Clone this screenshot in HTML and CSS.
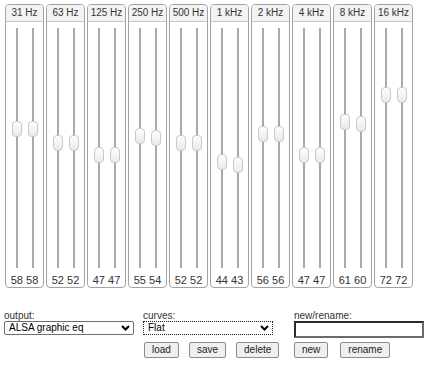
FILE: index.html
```html
<!DOCTYPE html>
<html lang="en">
<head>
  <meta charset="UTF-8" />
  <title>Equalizer</title>
  <link rel="stylesheet" href="styles.css">
</head>
<body>
  <div class="eq" id="eq"></div>

  <div class="controls">
    <div class="col col-output">
      <label class="lbl">output:</label>
      <div class="sel">
        <select>
          <option>ALSA graphic eq</option>
        </select>
        <svg class="chev" width="9" height="6" viewBox="0 0 9 6"><polyline points="1,1 4.5,4.5 8,1" fill="none" stroke="#000" stroke-width="2"/></svg>
      </div>
    </div>

    <div class="col col-curves">
      <label class="lbl">curves:</label>
      <div class="sel sel-focus">
        <select>
          <option>Flat</option>
        </select>
        <svg class="chev" width="9" height="6" viewBox="0 0 9 6"><polyline points="1,1 4.5,4.5 8,1" fill="none" stroke="#000" stroke-width="2"/></svg>
      </div>
      <div class="btns btns-curves">
        <button>load</button>
        <button>save</button>
        <button>delete</button>
      </div>
    </div>

    <div class="col col-name">
      <label class="lbl">new/rename:</label>
      <input type="text" class="name-input" />
      <div class="btns btns-name">
        <button>new</button>
        <button>rename</button>
      </div>
    </div>
  </div>

  <script>
    const bands = [
      { label: "31 Hz", values: [58, 58] },
      { label: "63 Hz", values: [52, 52] },
      { label: "125 Hz", values: [47, 47] },
      { label: "250 Hz", values: [55, 54] },
      { label: "500 Hz", values: [52, 52] },
      { label: "1 kHz", values: [44, 43] },
      { label: "2 kHz", values: [56, 56] },
      { label: "4 kHz", values: [47, 47] },
      { label: "8 kHz", values: [61, 60] },
      { label: "16 kHz", values: [72, 72] }
    ];

    const eq = document.getElementById("eq");

    // track is 240px high, 0..100
    function thumbTop(v) {
      return Math.round(240 - v * 2.4 - 8);
    }

    eq.innerHTML = bands.map(b => `
      <div class="band">
        <div class="band-head">${b.label}</div>
        <div class="faders">
          ${b.values.map(v => `<div class="track"><div class="thumb" style="top:${thumbTop(v)}px"></div></div>`).join("")}
        </div>
        <div class="vals">${b.values.join(" ")}</div>
      </div>`).join("");
  </script>
</body>
</html>
```

FILE: styles.css
```css
body {
  margin: 0;
  padding: 4px 0 0 4px;
  font-family: "Liberation Sans", Arial, sans-serif;
  color: #222;
  background: #fff;
}
.eq {
  display: flex;
  gap: 2px;
  margin-left: 1px;
}
.band {
  width: 39px;
  box-sizing: border-box;
  border: 1px solid #a3a3a3;
  border-radius: 4px;
  background: #fff;
}
.band-head {
  height: 16px;
  line-height: 16px;
  font-size: 10px;
  text-align: center;
  color: #333;
  background: #f3f3f3;
  border-bottom: 1px solid #c6c6c6;
  border-radius: 3px 3px 0 0;
}
.faders {
  display: flex;
  justify-content: center;
  gap: 14px;
  padding-top: 6px;
}
.track {
  position: relative;
  width: 2px;
  height: 240px;
  background: #a9a9a9;
}
.thumb {
  position: absolute;
  left: -4px;
  width: 10px;
  height: 16px;
  box-sizing: border-box;
  border: 1px solid #c8c8c8;
  border-radius: 4px;
  background: linear-gradient(#fefefe, #e9e9e9);
}
.vals {
  height: 19px;
  box-sizing: border-box;
  padding-top: 6px;
  line-height: 12px;
  font-size: 11px;
  text-align: center;
  color: #333;
}

.controls {
  display: flex;
  gap: 9px;
  margin-top: 22px;
}
.col {
  display: flex;
  flex-direction: column;
}
.col-output {
  width: 130px;
}
.col-curves {
  width: 142px;
}
.col-name {
  width: 130px;
}
.lbl {
  font-size: 10px;
  line-height: 11px;
  color: #333;
}
.sel {
  position: relative;
  width: 130px;
}
.sel select {
  display: block;
  width: 130px;
  height: 14px;
  box-sizing: border-box;
  margin: 0;
  padding: 0 0 0 4px;
  font-family: "Liberation Sans", Arial, sans-serif;
  font-size: 10px;
  line-height: 12px;
  color: #000;
  background: #fff;
  border: 1px solid #6e6e6e;
  border-radius: 2px;
  appearance: none;
  -webkit-appearance: none;
  outline: none;
}
.sel-focus select {
  border: 1px dotted #222;
  border-radius: 0;
}
.chev {
  position: absolute;
  right: 4px;
  top: 4px;
}
.btns {
  display: flex;
  gap: 12px;
}
.btns-curves {
  gap: 10px;
  margin-top: 7px;
  padding-left: 1px;
}
.btns-name {
  margin-top: 4px;
}
button {
  height: 16px;
  box-sizing: border-box;
  margin: 0;
  padding: 0 7px;
  font-family: "Liberation Sans", Arial, sans-serif;
  font-size: 10px;
  line-height: 12px;
  color: #222;
  background: #efefef;
  border: 1px solid #8c8c8c;
  border-radius: 2px;
}
.name-input {
  display: block;
  width: 130px;
  height: 17px;
  box-sizing: border-box;
  margin: 0;
  padding: 0 3px;
  font-size: 10px;
  border: 2px solid #2a2a2a;
  border-right-color: #6a6a6a;
  border-bottom-color: #6a6a6a;
  outline: none;
}
```
